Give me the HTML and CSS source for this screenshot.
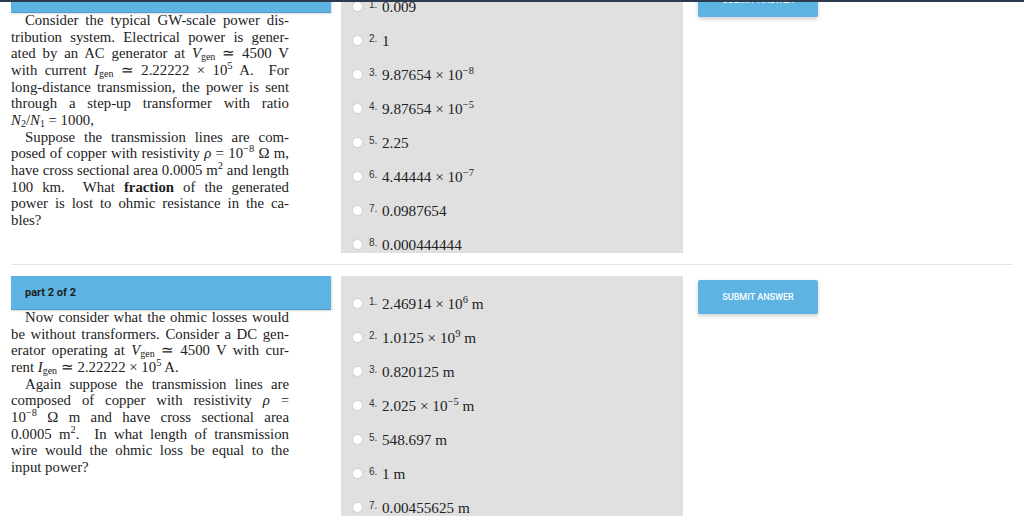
FILE: index.html
```html
<!DOCTYPE html>
<html>
<head>
<meta charset="utf-8">
<link rel="stylesheet" href="styles.css">
</head>
<body>
<div class="topbar"></div>
<div class="page">
  <section class="part first">
    <div class="left">
      <div class="phead">part 1 of 2</div>
      <div class="prob">
        <span class="ln ind">Consider the typical GW-scale power dis-</span>
        <span class="ln">tribution system. Electrical power is gener-</span>
        <span class="ln">ated by an AC generator at <i>V</i><sub>gen</sub> ≃ 4500 V</span>
        <span class="ln">with current <i>I</i><sub>gen</sub> ≃ 2.22222 × 10<sup>5</sup> A. &nbsp;For</span>
        <span class="ln">long-distance transmission, the power is sent</span>
        <span class="ln">through a step-up transformer with ratio</span>
        <span class="ln end"><i>N</i><sub>2</sub>/<i>N</i><sub>1</sub> = 1000,</span>
        <span class="ln ind">Suppose the transmission lines are com-</span>
        <span class="ln">posed of copper with resistivity <i>ρ</i> = 10<sup>−8</sup> Ω m,</span>
        <span class="ln">have cross sectional area 0.0005 m<sup>2</sup> and length</span>
        <span class="ln">100 km. &nbsp;What <b>fraction</b> of the generated</span>
        <span class="ln">power is lost to ohmic resistance in the ca-</span>
        <span class="ln end">bles?</span>
      </div>
    </div>
    <div class="opts">
      <div class="opt"><span class="radio"></span><span class="num">1.</span><span class="val">0.009</span></div>
      <div class="opt"><span class="radio"></span><span class="num">2.</span><span class="val">1</span></div>
      <div class="opt"><span class="radio"></span><span class="num">3.</span><span class="val">9.87654 × 10<sup>−8</sup></span></div>
      <div class="opt"><span class="radio"></span><span class="num">4.</span><span class="val">9.87654 × 10<sup>−5</sup></span></div>
      <div class="opt"><span class="radio"></span><span class="num">5.</span><span class="val">2.25</span></div>
      <div class="opt"><span class="radio"></span><span class="num">6.</span><span class="val">4.44444 × 10<sup>−7</sup></span></div>
      <div class="opt"><span class="radio"></span><span class="num">7.</span><span class="val">0.0987654</span></div>
      <div class="opt"><span class="radio"></span><span class="num">8.</span><span class="val">0.000444444</span></div>
    </div>
    <div class="act"><button class="submit">SUBMIT ANSWER</button></div>
  </section>
  <hr class="divider">
  <section class="part">
    <div class="left">
      <div class="phead">part 2 of 2</div>
      <div class="prob">
        <span class="ln ind">Now consider what the ohmic losses would</span>
        <span class="ln">be without transformers. Consider a DC gen-</span>
        <span class="ln">erator operating at <i>V</i><sub>gen</sub> ≃ 4500 V with cur-</span>
        <span class="ln end">rent <i>I</i><sub>gen</sub> ≃ 2.22222 × 10<sup>5</sup> A.</span>
        <span class="ln ind">Again suppose the transmission lines are</span>
        <span class="ln">composed of copper with resistivity <i>ρ</i> =</span>
        <span class="ln">10<sup>−8</sup> Ω m and have cross sectional area</span>
        <span class="ln">0.0005 m<sup>2</sup>. &nbsp;In what length of transmission</span>
        <span class="ln">wire would the ohmic loss be equal to the</span>
        <span class="ln end">input power?</span>
      </div>
    </div>
    <div class="opts">
      <div class="opt"><span class="radio"></span><span class="num">1.</span><span class="val">2.46914 × 10<sup>6</sup> m</span></div>
      <div class="opt"><span class="radio"></span><span class="num">2.</span><span class="val">1.0125 × 10<sup>9</sup> m</span></div>
      <div class="opt"><span class="radio"></span><span class="num">3.</span><span class="val">0.820125 m</span></div>
      <div class="opt"><span class="radio"></span><span class="num">4.</span><span class="val">2.025 × 10<sup>−5</sup> m</span></div>
      <div class="opt"><span class="radio"></span><span class="num">5.</span><span class="val">548.697 m</span></div>
      <div class="opt"><span class="radio"></span><span class="num">6.</span><span class="val">1 m</span></div>
      <div class="opt"><span class="radio"></span><span class="num">7.</span><span class="val">0.00455625 m</span></div>
    </div>
    <div class="act"><button class="submit">SUBMIT ANSWER</button></div>
  </section>
</div>
</body>
</html>
```
FILE: styles.css
```css
html, body {
  margin: 0;
  padding: 0;
  background: #ffffff;
  overflow: hidden;
}
body {
  font-family: "Liberation Serif", "Times New Roman", serif;
  color: #222222;
}
.topbar {
  position: fixed;
  top: 0;
  left: 0;
  right: 0;
  height: 2px;
  background: #2b3a4d;
  z-index: 10;
}
.page {
  padding: 0 11px;
  margin-top: -21px;
}
.part {
  display: flex;
  align-items: flex-start;
}
.left {
  width: 320px;
  flex: none;
}
.phead {
  height: 34px;
  box-sizing: border-box;
  background: #5db4e2;
  border-bottom: 1px solid #4f9fca;
  box-shadow: 1px 1px 2px rgba(0,0,0,0.15);
  padding-left: 14px;
  font-family: Roboto, "Liberation Sans", sans-serif;
  font-weight: 700;
  font-size: 11px;
  line-height: 34px;
  color: #1d1d1d;
}
.prob {
  width: 278px;
  font-size: 14.8px;
  line-height: 16.67px;
  margin-top: -1px;
}
.ln {
  display: block;
  text-align: justify;
  text-align-last: justify;
  white-space: nowrap;
}
.ln.end {
  text-align-last: left;
}
.ln.ind {
  text-indent: 14px;
}
.prob sub {
  font-size: 10px;
  line-height: 0;
  vertical-align: -2px;
}
sup {
  font-size: 10.5px;
  line-height: 0;
  vertical-align: 6px;
}
.opts {
  width: 342px;
  flex: none;
  margin-left: 10px;
  background: #e0e0e0;
  box-sizing: border-box;
  padding: 18px 0 0 11px;
  display: flex;
  flex-direction: column;
  gap: 16px;
}
.opt {
  height: 18px;
  display: flex;
  align-items: center;
}
.radio {
  width: 11px;
  height: 11px;
  border-radius: 50%;
  background: #ffffff;
  border: 1px solid #d0d0d0;
  box-sizing: border-box;
  flex: none;
}
.num {
  font-family: "Liberation Sans", Arial, sans-serif;
  font-size: 10px;
  margin-left: 6px;
  width: 13px;
  position: relative;
  top: -2px;
  color: #333333;
}
.val {
  font-size: 15.2px;
  position: relative;
  top: 1px;
  white-space: nowrap;
}
.act {
  margin-left: 15px;
  padding-top: 4px;
}
.submit {
  width: 120px;
  height: 34px;
  border: none;
  border-radius: 2px;
  background: #5db4e2;
  color: #ffffff;
  font-family: Roboto, "Liberation Sans", sans-serif;
  font-weight: 500;
  font-size: 9px;
  box-shadow: 0 2px 4px rgba(0,0,0,0.2);
  padding: 0;
}
.divider {
  border: none;
  border-top: 1px solid #e2e2e2;
  margin: 11px 0;
  height: 0;
}
```
